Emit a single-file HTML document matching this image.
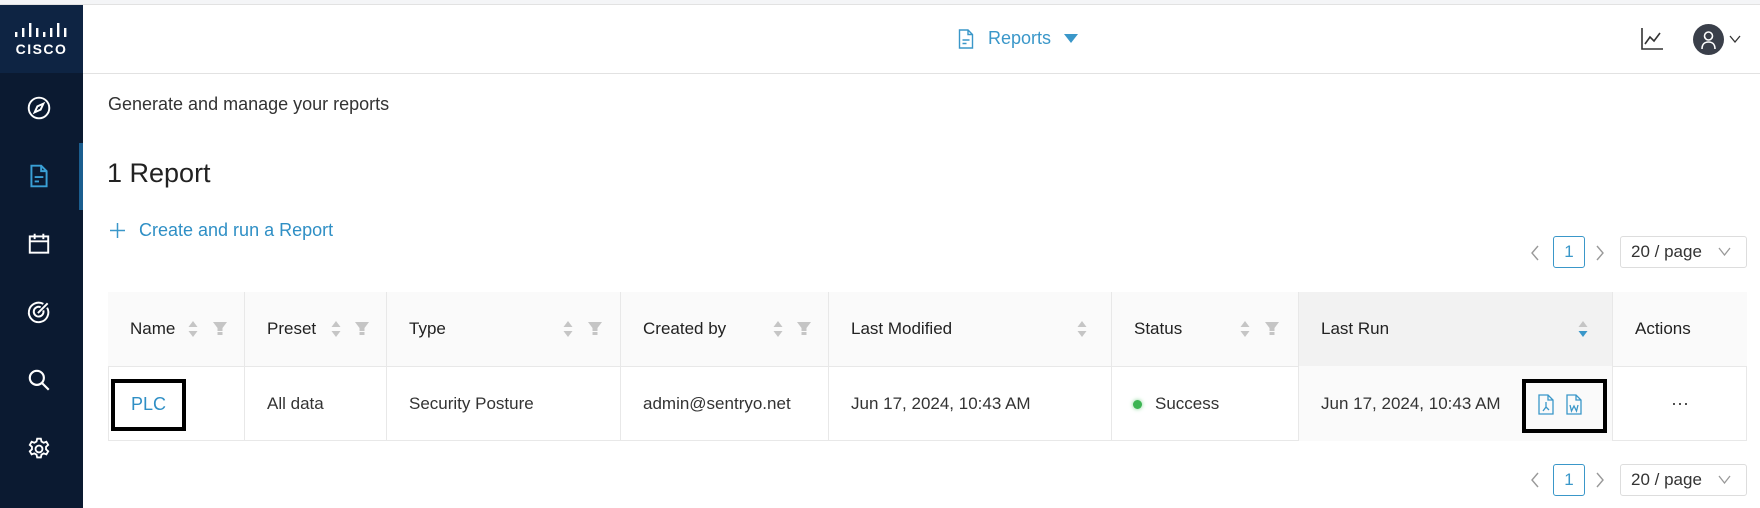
<!DOCTYPE html>
<html><head><meta charset="utf-8"><style>
*{box-sizing:border-box;margin:0;padding:0}
body{width:1760px;height:508px;overflow:hidden;background:#fff;font-family:"Liberation Sans",sans-serif;color:#333;position:relative}
.a{position:absolute}
.side{left:0;top:5px;width:83px;height:503px;background:#0b1a31}
.logo{left:0;top:5px;width:83px;height:68px;background:#0e2443}
.ic{position:absolute;left:26px;width:26px;height:26px}
.th{position:absolute;top:292px;height:74px;line-height:74px;font-size:17px;color:#222;padding-left:22px;border-right:1px solid #e8e8e8;background:#fafafa}
.td{position:absolute;top:366px;height:75px;line-height:75px;font-size:17px;color:#333;padding-left:22px;border-right:1px solid #e8e8e8}
.pg{font-size:17px;color:#333}
</style></head><body>
<div class="a" style="left:0;top:0;width:1760px;height:5px;background:#f4f5f7;border-bottom:1px solid #e2e2e2"></div>
<div class="a side"></div>
<div class="a logo"></div>
<svg class="a" style="left:13px;top:22px" width="58" height="18" viewBox="0 0 58 18" fill="#fff">
<rect x="2" y="10" width="2.4" height="5"/><rect x="9" y="6" width="2.4" height="9"/><rect x="16" y="1" width="2.4" height="14"/><rect x="23" y="6" width="2.4" height="9"/><rect x="30" y="10" width="2.4" height="5"/><rect x="37" y="6" width="2.4" height="9"/><rect x="44" y="1" width="2.4" height="14"/><rect x="51" y="6" width="2.4" height="9"/></svg>
<div class="a" style="left:0;top:41px;width:83px;text-align:center;font-size:14px;font-weight:bold;color:#fff;letter-spacing:1.5px">CISCO</div>
<div class="a" style="left:79px;top:143px;width:4px;height:67px;background:#1b5e8f"></div>
<svg class="ic" style="top:95px" viewBox="0 0 24 24" fill="none" stroke="#fff" stroke-width="1.8"><circle cx="12" cy="12" r="9.5"/><path d="M16 8l-2.5 5.5L8 16l2.5-5.5z"/></svg>
<svg class="ic" style="top:163px" viewBox="0 0 24 24" fill="none" stroke="#3aa0d6" stroke-width="1.8"><path d="M5 2.5h9l5 5v14H5z M14 2.5v5h5 M8 13h8 M8 17h4"/></svg>
<svg class="ic" style="top:231px" viewBox="0 0 24 24" fill="none" stroke="#fff" stroke-width="1.8"><rect x="3.5" y="5" width="17" height="15"/><path d="M3.5 9.5h17 M8 2.5v5 M16 2.5v5"/></svg>
<svg class="ic" style="top:299px" viewBox="0 0 24 24" fill="none" stroke="#fff" stroke-width="1.8"><path d="M19.5 8A9 9 0 1 1 16 4.5"/><path d="M16 10.5A4.5 4.5 0 1 1 13.5 7.6"/><path d="M11 13L20 4"/></svg>
<svg class="ic" style="top:367px" viewBox="0 0 24 24" fill="none" stroke="#fff" stroke-width="2"><circle cx="10" cy="10" r="6.5"/><path d="M15 15l6 6"/></svg>
<svg class="ic" style="top:436px" viewBox="0 0 24 24" fill="none" stroke="#fff" stroke-width="1.7"><circle cx="12" cy="12" r="3.2"/><path d="M10.3 2.5h3.4l.6 2.6 2 1.1 2.5-.9 1.7 2.9-2 1.8v2.3l2 1.8-1.7 2.9-2.5-.9-2 1.1-.6 2.6h-3.4l-.6-2.6-2-1.1-2.5.9-1.7-2.9 2-1.8V10l-2-1.8 1.7-2.9 2.5.9 2-1.1z"/></svg>

<div class="a" style="left:83px;top:73px;width:1677px;height:1px;background:#e2e2e2"></div>
<svg class="a" style="left:958px;top:29px" width="16" height="20" viewBox="0 0 16 20" fill="none" stroke="#3a97c9" stroke-width="1.4"><path d="M1.5 1h8.5l4.5 4.5V19h-13z M10 1v4.5h4.5 M4.5 11h7 M4.5 14.5h4"/></svg>
<div class="a" style="left:988px;top:28px;font-size:18px;color:#3a97c9">Reports</div>
<div class="a" style="left:1064px;top:34px;width:0;height:0;border-left:7px solid transparent;border-right:7px solid transparent;border-top:9px solid #3a97c9"></div>
<svg class="a" style="left:1640px;top:27px" width="24" height="24" viewBox="0 0 24 24" fill="none" stroke="#333" stroke-width="1.6"><path d="M2 1v21h21 M5 17l5-7 4 4 6-8"/></svg>
<div class="a" style="left:1693px;top:24px;width:31px;height:31px;border-radius:50%;background:#3a3f4a"></div>
<svg class="a" style="left:1700px;top:30px" width="17" height="20" viewBox="0 0 17 20" fill="none" stroke="#fff" stroke-width="1.6"><circle cx="8.5" cy="6" r="4"/><path d="M2 19c0-5 3-7 6.5-7s6.5 2 6.5 7"/></svg>
<svg class="a" style="left:1729px;top:35px" width="12" height="8" viewBox="0 0 12 8" fill="none" stroke="#333" stroke-width="1.3"><path d="M1 1l5 6 5-6"/></svg>

<div class="a" style="left:108px;top:94px;font-size:18px;color:#333">Generate and manage your reports</div>
<div class="a" style="left:107px;top:158px;font-size:27px;color:#222">1 Report</div>
<svg class="a" style="left:109px;top:222px" width="17" height="17" viewBox="0 0 17 17" stroke="#3a97c9" stroke-width="1.5"><path d="M8.5 1v15 M1 8.5h15"/></svg>
<div class="a" style="left:139px;top:220px;font-size:18px;color:#2f8fc5">Create and run a Report</div>

<svg class="a" style="left:1530px;top:245px" width="10" height="16" viewBox="0 0 10 16" fill="none" stroke="#999" stroke-width="1.4"><path d="M8 1L2 8l6 7"/></svg>
<div class="a pg" style="left:1553px;top:236px;width:32px;height:32px;border:1px solid #3a97c9;border-radius:3px;color:#3a97c9;text-align:center;line-height:30px">1</div>
<svg class="a" style="left:1595px;top:245px" width="10" height="16" viewBox="0 0 10 16" fill="none" stroke="#999" stroke-width="1.4"><path d="M2 1l6 7-6 7"/></svg>
<div class="a pg" style="left:1620px;top:236px;width:127px;height:32px;border:1px solid #ddd;border-radius:3px;line-height:30px;padding-left:10px">20 / page</div>
<svg class="a" style="left:1718px;top:247px" width="13" height="9" viewBox="0 0 13 9" fill="none" stroke="#999" stroke-width="1.3"><path d="M1 1l5.5 7L12 1"/></svg>

<div class="a" style="left:108px;top:292px;width:1639px;height:149px;border:1px solid #e8e8e8"></div>
<div class="th" style="left:108px;width:137px">Name</div>
<div class="th" style="left:245px;width:142px">Preset</div>
<div class="th" style="left:387px;width:234px">Type</div>
<div class="th" style="left:621px;width:208px">Created by</div>
<div class="th" style="left:829px;width:283px">Last Modified</div>
<div class="th" style="left:1112px;width:187px">Status</div>
<div class="th" style="left:1299px;width:314px;background:#f2f2f2">Last Run</div>
<div class="th" style="left:1613px;width:134px;border-right:none">Actions</div>
<div class="a" style="left:108px;top:366px;width:1639px;height:1px;background:#e8e8e8"></div>

<svg width="0" height="0" style="position:absolute"><defs>
<g id="s"><path d="M5 0L9.5 6h-9z" fill="#c5c5c5"/><path d="M5 16L9.5 10h-9z" fill="#c5c5c5"/></g>
<g id="f"><path d="M0 0h14l-4.5 6v3h-5v-3z M4.5 10h5v3h-5z" fill="#c5c5c5"/></g>
</defs></svg>
<svg class="a" style="left:188px;top:321px" width="10" height="16"><use href="#s"/></svg>
<svg class="a" style="left:213px;top:322px" width="14" height="14"><use href="#f"/></svg>
<svg class="a" style="left:331px;top:321px" width="10" height="16"><use href="#s"/></svg>
<svg class="a" style="left:355px;top:322px" width="14" height="14"><use href="#f"/></svg>
<svg class="a" style="left:563px;top:321px" width="10" height="16"><use href="#s"/></svg>
<svg class="a" style="left:588px;top:322px" width="14" height="14"><use href="#f"/></svg>
<svg class="a" style="left:773px;top:321px" width="10" height="16"><use href="#s"/></svg>
<svg class="a" style="left:797px;top:322px" width="14" height="14"><use href="#f"/></svg>
<svg class="a" style="left:1077px;top:321px" width="10" height="16"><use href="#s"/></svg>
<svg class="a" style="left:1240px;top:321px" width="10" height="16"><use href="#s"/></svg>
<svg class="a" style="left:1265px;top:322px" width="14" height="14"><use href="#f"/></svg>
<svg class="a" style="left:1578px;top:321px" width="10" height="16"><path d="M5 0L9.5 6h-9z" fill="#c5c5c5"/><path d="M5 16L9.5 10h-9z" fill="#3a97c9"/></svg>

<div class="td" style="left:108px;width:137px"></div>
<div class="a" style="left:111px;top:379px;width:75px;height:52px;border:4px solid #000"></div>
<div class="a" style="left:131px;top:394px;font-size:18px;color:#2f8fc5">PLC</div>
<div class="td" style="left:245px;width:142px">All data</div>
<div class="td" style="left:387px;width:234px">Security Posture</div>
<div class="td" style="left:621px;width:208px">admin@sentryo.net</div>
<div class="td" style="left:829px;width:283px">Jun 17, 2024, 10:43 AM</div>
<div class="td" style="left:1112px;width:187px;padding-left:43px">Success</div>
<div class="a" style="left:1133px;top:400px;width:9px;height:9px;border-radius:50%;background:#3db553;box-shadow:0 0 4px #7ad08a"></div>
<div class="td" style="left:1299px;width:314px;background:#fafafa">Jun 17, 2024, 10:43 AM</div>
<div class="td" style="left:1613px;width:134px;border-right:none;padding-left:0;text-align:center;font-size:18px">···</div>
<div class="a" style="left:1522px;top:379px;width:85px;height:54px;border:4px solid #000"></div>
<svg class="a" style="left:1538px;top:394px" width="16" height="21" viewBox="0 0 16 21" fill="none" stroke="#3a97c9" stroke-width="1.3"><path d="M1 1h9l5 5v14H1z M10 1v5h5 M8 8v5l-3 4 M8 13l3 3"/></svg>
<svg class="a" style="left:1566px;top:394px" width="16" height="21" viewBox="0 0 16 21" fill="none" stroke="#3a97c9" stroke-width="1.3"><path d="M1 1h9l5 5v14H1z M10 1v5h5 M4 11l1.5 6 2.5-5 2.5 5 1.5-6"/></svg>

<svg class="a" style="left:1530px;top:472px" width="10" height="16" viewBox="0 0 10 16" fill="none" stroke="#999" stroke-width="1.4"><path d="M8 1L2 8l6 7"/></svg>
<div class="a pg" style="left:1553px;top:464px;width:32px;height:32px;border:1px solid #3a97c9;border-radius:3px;color:#3a97c9;text-align:center;line-height:30px">1</div>
<svg class="a" style="left:1595px;top:472px" width="10" height="16" viewBox="0 0 10 16" fill="none" stroke="#999" stroke-width="1.4"><path d="M2 1l6 7-6 7"/></svg>
<div class="a pg" style="left:1620px;top:464px;width:127px;height:32px;border:1px solid #ddd;border-radius:3px;line-height:30px;padding-left:10px">20 / page</div>
<svg class="a" style="left:1718px;top:475px" width="13" height="9" viewBox="0 0 13 9" fill="none" stroke="#999" stroke-width="1.3"><path d="M1 1l5.5 7L12 1"/></svg>
</body></html>
